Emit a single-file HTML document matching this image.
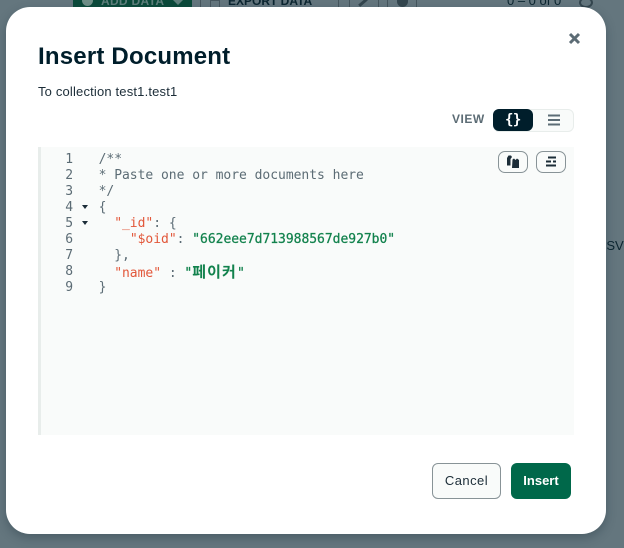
<!DOCTYPE html>
<html><head><meta charset="utf-8">
<style>
html,body{margin:0;padding:0;width:624px;height:548px;overflow:hidden;background:#64767e;font-family:"Liberation Sans","Noto Sans CJK KR",sans-serif}
.a{position:absolute;white-space:nowrap}
#m{left:6px;top:7px;width:600px;height:527px;background:#fff;border-radius:24px;box-shadow:0 4px 10px rgba(30,50,60,.35)}
.c{font-family:"DejaVu Sans Mono",monospace;font-size:13px;line-height:16px;color:#5c6c75;letter-spacing:-.025px}
.n{left:49px;width:24px;text-align:right;color:#5c6c75}
.r{color:#e2573a}.g{color:#12824d;-webkit-text-stroke:.25px #12824d}
.btn{box-sizing:border-box;border:1px solid #889397;border-radius:6px;background:#f9fbfa}
</style></head><body>
<!-- background toolbar -->
<div class="a" style="left:73px;top:-8px;width:119px;height:15px;background:#0b4a3a"></div>
<div class="a" style="left:101px;top:-5px;font-size:12px;font-weight:bold;color:#5f7f7c;line-height:13px;letter-spacing:.3px">ADD DATA</div>
<div class="a" style="left:82px;top:-5px;width:11px;height:11px;border-radius:50%;background:#6f8f88"></div>
<div class="a" style="left:173px;top:0;width:0;height:0;border:5px solid transparent;border-top-color:#5f7f7c"></div>
<div class="a" style="left:200px;top:0;width:1px;height:7px;background:#46565e"></div>
<div class="a" style="left:210px;top:0;width:8px;height:6px;border:1px solid #46565e"></div>
<div class="a" style="left:228px;top:-5px;font-size:12px;font-weight:bold;color:#0b2530;line-height:13px">EXPORT DATA</div>
<div class="a" style="left:338px;top:0;width:1px;height:7px;background:#46565e"></div>
<div class="a" style="left:349px;top:0;width:1px;height:7px;background:#46565e"></div>
<div class="a" style="left:378px;top:0;width:1px;height:7px;background:#46565e"></div>
<div class="a" style="left:387px;top:0;width:1px;height:7px;background:#46565e"></div>
<div class="a" style="left:416px;top:0;width:1px;height:7px;background:#46565e"></div>
<div class="a" style="left:397px;top:-2px;width:11px;height:9px;background:#33454e;border-radius:0 0 6px 6px"></div>
<div class="a" style="left:358px;top:1px;width:10px;height:3px;background:#33454e;transform:rotate(-40deg)"></div>
<div class="a" style="left:507px;top:-6px;font-size:13px;color:#0b2530;line-height:14px">0 – 0 of 0</div>
<div class="a" style="left:579px;top:-3px;width:10px;height:7px;border:2px solid #33454e;border-radius:50%"></div>
<div class="a" style="left:597px;top:238px;font-size:13px;line-height:16px;color:#0b2530">CSV</div>

<div class="a" id="m"></div>
<div class="a" style="left:38px;top:43px;font-size:24px;line-height:28px;font-weight:bold;color:#001e2b;letter-spacing:.2px">Insert Document</div>
<div class="a" style="left:38px;top:84px;font-size:13px;line-height:16px;color:#1c2d38;letter-spacing:.17px">To collection test1.test1</div>
<svg class="a" style="left:568px;top:32px" width="13" height="13" viewBox="0 0 13 13"><path d="M2 2l9 9M11 2l-9 9" stroke="#5c6c75" stroke-width="3"/></svg>

<div class="a" style="left:452px;top:112px;font-size:12px;line-height:15px;font-weight:bold;color:#5c6c75;letter-spacing:.5px">VIEW</div>
<div class="a" style="left:493px;top:109px;width:81px;height:23px;box-sizing:border-box;background:#f9fbfa;border:1px solid #e8edeb;border-radius:6px"></div>
<div class="a" style="left:493px;top:109px;width:40px;height:22px;background:#001e2b;border-radius:6px"></div>
<div class="a" style="left:505px;top:112px;font-family:'DejaVu Sans Mono',monospace;font-size:14px;line-height:17px;font-weight:bold;color:#fff;letter-spacing:-.5px">{}</div>
<svg class="a" style="left:548px;top:114px" width="12" height="12" viewBox="0 0 12 12"><path d="M0 1.500h12M0 6h12M0 10.500h12" stroke="#5c6c75" stroke-width="2"/></svg>

<div class="a" style="left:38px;top:147px;width:536px;height:288px;background:#f9fbfa"></div>
<div class="a" style="left:38px;top:147px;width:3px;height:288px;background:#e8edeb"></div>

<div class="a btn" style="left:498px;top:151px;width:30px;height:22px;border-radius:7px"></div>
<svg class="a" style="left:506px;top:155px" width="14" height="14" viewBox="0 0 14 14"><path d="M2.500 0.500h2.500l1 1.500-1.500 2v6.500H1V3zM6.500 4.500L8 3.500l1.500 1.500L11 3.500l2 1.500v8H6z" fill="#1c2d38"/></svg>
<div class="a btn" style="left:536px;top:151px;width:30px;height:22px;border-radius:7px"></div>
<svg class="a" style="left:545px;top:156px" width="12" height="12" viewBox="0 0 12 12"><path d="M3 1.500h8M1 5.500h5M8 5.500h3M1 9.500h10" stroke="#1c2d38" stroke-width="2"/></svg>

<div class="a c n" style="top:152px">1</div>
<div class="a c n" style="top:168px">2</div>
<div class="a c n" style="top:184px">3</div>
<div class="a c n" style="top:200px">4</div>
<div class="a c n" style="top:216px">5</div>
<div class="a c n" style="top:232px">6</div>
<div class="a c n" style="top:248px">7</div>
<div class="a c n" style="top:264px">8</div>
<div class="a c n" style="top:280px">9</div>
<div class="a" style="left:82px;top:205px;width:0;height:0;border:3px solid transparent;border-top:4px solid #1c2d38;border-bottom:0"></div>
<div class="a" style="left:82px;top:221px;width:0;height:0;border:3px solid transparent;border-top:4px solid #1c2d38;border-bottom:0"></div>

<div class="a c" style="left:98.600px;top:152px">/**</div>
<div class="a c" style="left:98.600px;top:168px">* Paste one or more documents here</div>
<div class="a c" style="left:98.600px;top:184px">*/</div>
<div class="a c" style="left:98.600px;top:200px">{</div>
<div class="a c" style="left:98.600px;top:216px;white-space:pre">  <span class="r">"_id"</span>: {</div>
<div class="a c" style="left:98.600px;top:232px;white-space:pre">    <span class="r">"$oid"</span>: <span class="g">"662eee7d713988567de927b0"</span></div>
<div class="a c" style="left:98.600px;top:248px;white-space:pre">  },</div>
<div class="a c" style="left:98.600px;top:264px;white-space:pre">  <span class="r">"name"</span> : <span class="g">"<span style="font-family:'Noto Sans CJK KR','WenQuanYi Zen Hei',sans-serif;font-size:15px;font-weight:bold;-webkit-text-stroke:0;letter-spacing:1.100px;line-height:16px">페이커</span>"</span></div>
<div class="a c" style="left:98.600px;top:280px">}</div>

<div class="a btn" style="left:432px;top:463px;width:69px;height:36px;text-align:center;font-size:13px;line-height:34px;color:#1c2d38;letter-spacing:.45px">Cancel</div>
<div class="a" style="left:511px;top:463px;width:60px;height:36px;border-radius:6px;background:#00684a;text-align:center;font-size:13px;line-height:36px;font-weight:bold;color:#fff">Insert</div>
</body></html>
